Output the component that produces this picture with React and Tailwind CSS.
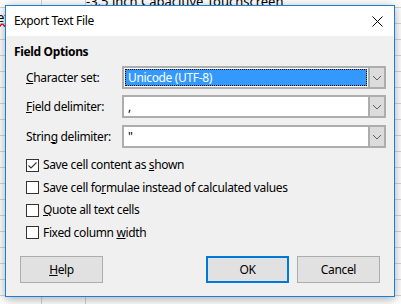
import React from "react";

const font = { fontFamily: '"Noto Sans", "Open Sans", sans-serif' };

function Chevron() {
  return (
    <svg width="10" height="6" viewBox="0 0 10 6" className="block">
      <path d="M1 1 L5 5 L9 1" fill="none" stroke="#606060" strokeWidth="1" />
    </svg>
  );
}

function Combo({ value, selected }) {
  return (
    <div className="flex h-[23px] w-[264px] border-2 border-[#adadad] bg-white">
      <div className="flex flex-1 items-center p-[1px]">
        {selected ? (
          <div className="flex h-full w-full items-center border border-dotted border-black bg-[#3399ff] pl-[2px] text-white">
            {value}
          </div>
        ) : (
          <div className="pl-[3px] text-black">{value}</div>
        )}
      </div>
      <div className="flex w-[16px] items-center justify-center border-l-2 border-[#adadad] bg-[#dcdcdc]">
        <Chevron />
      </div>
    </div>
  );
}

function Check({ checked, children }) {
  return (
    <div className="flex h-[22.5px] items-center">
      <div className="flex h-[13px] w-[13px] items-center justify-center border border-[#333] bg-white">
        {checked && (
          <svg width="11" height="11" viewBox="0 0 11 11">
            <path d="M1.5 5.5 L4 8 L9.5 2.5" fill="none" stroke="#333" strokeWidth="1.1" />
          </svg>
        )}
      </div>
      <span className="ml-[4px] text-[12px] text-black">{children}</span>
    </div>
  );
}

function Btn({ children, primary }) {
  return (
    <div
      className={
        "flex h-[27px] w-[83px] items-center justify-center bg-[#e1e1e1] text-[12px] text-black " +
        (primary ? "border-2 border-[#0078d7]" : "border border-[#adadad]")
      }
    >
      {children}
    </div>
  );
}

export default function App() {
  const hLines = [];
  for (let y = 7; y < 304; y += 16) hLines.push(y);
  return (
    <div className="relative h-[304px] w-[401px] overflow-hidden bg-white" style={font}>
      {/* spreadsheet background */}
      {hLines.map((y) => (
        <div key={y} className="absolute left-0 h-px w-full bg-[#d4d4d4]" style={{ top: y }} />
      ))}
      <div className="absolute top-0 left-[41px] h-full w-px bg-[#d4d4d4]" />
      <div className="absolute top-0 left-[85px] h-full w-px bg-[#d4d4d4]" />
      <div className="absolute top-[-7px] left-[86px] text-[13px] leading-[16px] text-black">
        -3.5 inch Capacitive Touchscreen
      </div>
      <div className="absolute top-[9px] left-[-3px] text-[13px] leading-[16px] text-black underline decoration-wavy decoration-red-600">
        et
      </div>

      {/* dialog */}
      <div className="absolute top-[5px] left-[5px] flex h-[292px] w-[390px] flex-col border border-[#1a7fd7] bg-[#f0f0f0] tracking-[-0.35px] shadow-[0_2px_10px_rgba(0,0,0,0.35)]">
        <div className="flex h-[30px] items-center justify-between bg-white pl-[8px] pr-[11px]">
          <span className="text-[12px] text-black">Export Text File</span>
          <svg width="11" height="11" viewBox="0 0 11 11">
            <path d="M0.5 0.5 L10.5 10.5 M10.5 0.5 L0.5 10.5" stroke="#000" strokeWidth="1" />
          </svg>
        </div>
        <div className="flex flex-1 flex-col px-[8px] pt-[8px] text-[12px] leading-[16px] text-black">
          <div className="font-bold">Field Options</div>
          <div className="mt-[6px] flex flex-col pl-[12px]">
            <div className="flex items-center justify-between">
              <span><u>C</u>haracter set:</span>
              <Combo value="Unicode (UTF-8)" selected />
            </div>
            <div className="mt-[6px] flex items-center justify-between">
              <span><u>F</u>ield delimiter:</span>
              <Combo value="," />
            </div>
            <div className="mt-[7px] flex items-center justify-between">
              <span>Strin<u>g</u> delimiter:</span>
              <Combo value={'"'} />
            </div>
            <div className="mt-[6px] flex flex-col">
              <Check checked>Save cell content as <u>s</u>hown</Check>
              <Check>Save cell fo<u>r</u>mulae instead of calculated values</Check>
              <Check><u>Q</u>uote all text cells</Check>
              <Check>Fixed column <u>w</u>idth</Check>
            </div>
          </div>
          <div className="mt-auto mb-[13px] flex items-center justify-between pl-[6px] pr-[6px]">
            <Btn><span><u>H</u>elp</span></Btn>
            <div className="flex gap-[8px]">
              <Btn primary>OK</Btn>
              <Btn>Cancel</Btn>
            </div>
          </div>
        </div>
      </div>
    </div>
  );
}
